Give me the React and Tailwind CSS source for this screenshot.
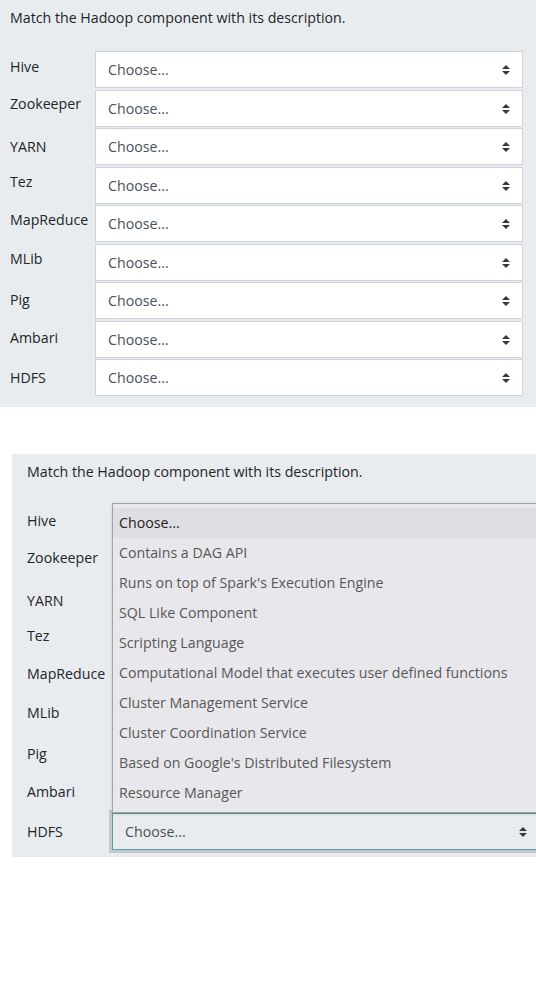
import React from 'react';

const components = [
    { name: 'Hive', pt: 'pt-[5px]' },
    { name: 'Zookeeper', pt: 'pt-[3px]' },
    { name: 'YARN', pt: 'pt-[8px]' },
    { name: 'Tez', pt: 'pt-[4px]' },
    { name: 'MapReduce', pt: 'pt-[4px]' },
    { name: 'MLib', pt: 'pt-[4px]' },
    { name: 'Pig', pt: 'pt-[7px]' },
    { name: 'Ambari', pt: 'pt-[6px]' },
    { name: 'HDFS', pt: 'pt-[8px]' },
];

const descriptions = [
    'Contains a DAG API',
    "Runs on top of Spark's Execution Engine",
    'SQL Like Component',
    'Scripting Language',
    'Computational Model that executes user defined functions',
    'Cluster Management Service',
    'Cluster Coordination Service',
    "Based on Google's Distributed Filesystem",
    'Resource Manager',
];

const Arrows = () => (
    <svg width="8" height="10" viewBox="0 0 8 10" className="shrink-0">
        <path d="M0 4 L4 0 L8 4 Z M0 6 L8 6 L4 10 Z" fill="#343a40" />
    </svg>
);

// hidden: the select sits under the open list, so its face is not drawn
const Select = ({ focused, hidden }) => {
    if (hidden) {
        return <div className="w-[428px] h-[37px] border border-[#ced4da] bg-white" />;
    }
    return (
        <div
            className={
                focused
                    ? 'w-[428px] h-[37px] flex items-center justify-between pl-[12px] pr-[12px] pt-[1px] border border-[#5a9e9f] bg-[#e9ecef] shadow-[0_0_0_3px_#c0cbcb] text-[#495057]'
                    : 'w-[428px] h-[37px] flex items-center justify-between pl-[12px] pr-[12px] pt-[1px] border border-[#ced4da] bg-white text-[#495057]'
            }
        >
            <span>Choose...</span>
            <Arrows />
        </div>
    );
};

const Question = ({ open }) => {
    const last = components.length - 1;
    return (
        <div className="relative">
            <div className="pt-[7px] pb-[20px] leading-[22px]">Match the Hadoop component with its description.</div>
            <div className="flex flex-col gap-[1.5px] pt-[2px]">
                {components.map((c, i) => (
                    <div key={c.name} className="flex items-start">
                        <div className={`w-[85px] shrink-0 leading-[22px] ${c.pt}`}>{c.name}</div>
                        <Select focused={open && i === last} hidden={open && i !== last} />
                    </div>
                ))}
            </div>

            {open && (
                <div className="absolute left-[85px] top-[49px] w-[460px] h-[310px] border border-[#a4a4a4] bg-[#e8e7ec] pt-[4px] shadow-[0_1px_3px_rgba(0,0,0,0.15)]">
                    <div className="h-[30px] flex items-center pl-[6px] bg-[#dfdee3] text-[#222]">Choose...</div>
                    {descriptions.map((d) => (
                        <div key={d} className="h-[30px] flex items-center pl-[6px] text-[#585858]">{d}</div>
                    ))}
                </div>
            )}
        </div>
    );
};

export default function App() {
    return (
        <div className="w-[536px] h-[998px] overflow-hidden bg-white text-[14.2px] text-[#212529]" style={{ fontFamily: '"Open Sans", "Noto Sans", sans-serif' }}>
            <div className="h-[407px] bg-[#e9ecef] pl-[10px]">
                <Question />
            </div>
            <div className="mt-[47px] ml-[12px] w-[560px] h-[403px] bg-[#e9ecef] pl-[15px]">
                <Question open />
            </div>
        </div>
    );
}
